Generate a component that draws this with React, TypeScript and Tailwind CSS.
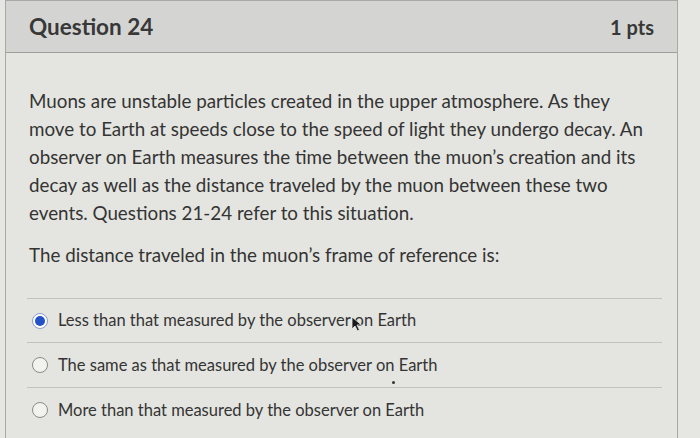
export default function App() {
  const options = [
    { label: 'Less than that measured by the observer on Earth', checked: true, h: 'h-[44px]' },
    { label: 'The same as that measured by the observer on Earth', checked: false, h: 'h-[45px]' },
    { label: 'More than that measured by the observer on Earth', checked: false, h: 'h-[45px]' },
  ]

  return (
    <main
      className="relative w-[700px] h-[438px] overflow-hidden bg-[#e6e7e2] text-[#343434]"
      style={{ fontFamily: 'Lato, "Open Sans", sans-serif' }}
    >
      <div className="ml-[5px] w-[673px] h-full border-l border-r border-t border-[#a8a9a5] bg-[#e4e5e0]">
        <div className="h-[52px] bg-[#d4d5d2] border-b border-[#9e9f9b] flex items-center justify-between pl-[23px] pr-[23px]">
          <h2 className="text-[22.5px] font-bold text-[#383838]">Question 24</h2>
          <span className="text-[20px] font-bold text-[#383838]">1 pts</span>
        </div>

        <div className="pt-[34px] pl-[23px] pr-[10px]">
          <p className="text-[18.8px] leading-[28px] whitespace-nowrap">
            Muons are unstable particles created in the upper atmosphere. As they
            <br />
            move to Earth at speeds close to the speed of light they undergo decay. An
            <br />
            observer on Earth measures the time between the muon’s creation and its
            <br />
            decay as well as the distance traveled by the muon between these two
            <br />
            events. Questions 21-24 refer to this situation.
          </p>
          <p className="mt-[14px] text-[18.8px] leading-[28px]">
            The distance traveled in the muon’s frame of reference is:
          </p>

          <div className="mt-[29px] ml-[-2px] w-[635px]">
            {options.map((o) => (
              <div
                key={o.label}
                className={`${o.h} border-t border-[#c2c3bf] flex items-center gap-[10px] pl-[5px]`}
              >
                {o.checked ? (
                  <span className="w-[16px] h-[16px] rounded-full border-[1.5px] border-[#8a9cc8] bg-white flex items-center justify-center">
                    <span className="w-[10px] h-[10px] rounded-full bg-[#2450c8]" />
                  </span>
                ) : (
                  <span className="w-[16px] h-[16px] rounded-full border-[1.5px] border-[#8a8b88] bg-[#f2f2ef]" />
                )}
                <span className="text-[16.5px]">{o.label}</span>
              </div>
            ))}
          </div>
        </div>
      </div>

      <svg
        className="absolute left-[351px] top-[316px]"
        width="12"
        height="16"
        viewBox="0 0 12 16"
      >
        <path d="M1 1 L1 13 L4 10 L6.5 15 L8.5 14 L6 9 L10.5 9 Z" fill="#1a1a1a" stroke="#eee" strokeWidth="0.8" />
      </svg>
      <span className="absolute left-[392px] top-[381px] w-[3px] h-[3px] rounded-full bg-[#333]" />
    </main>
  )
}
